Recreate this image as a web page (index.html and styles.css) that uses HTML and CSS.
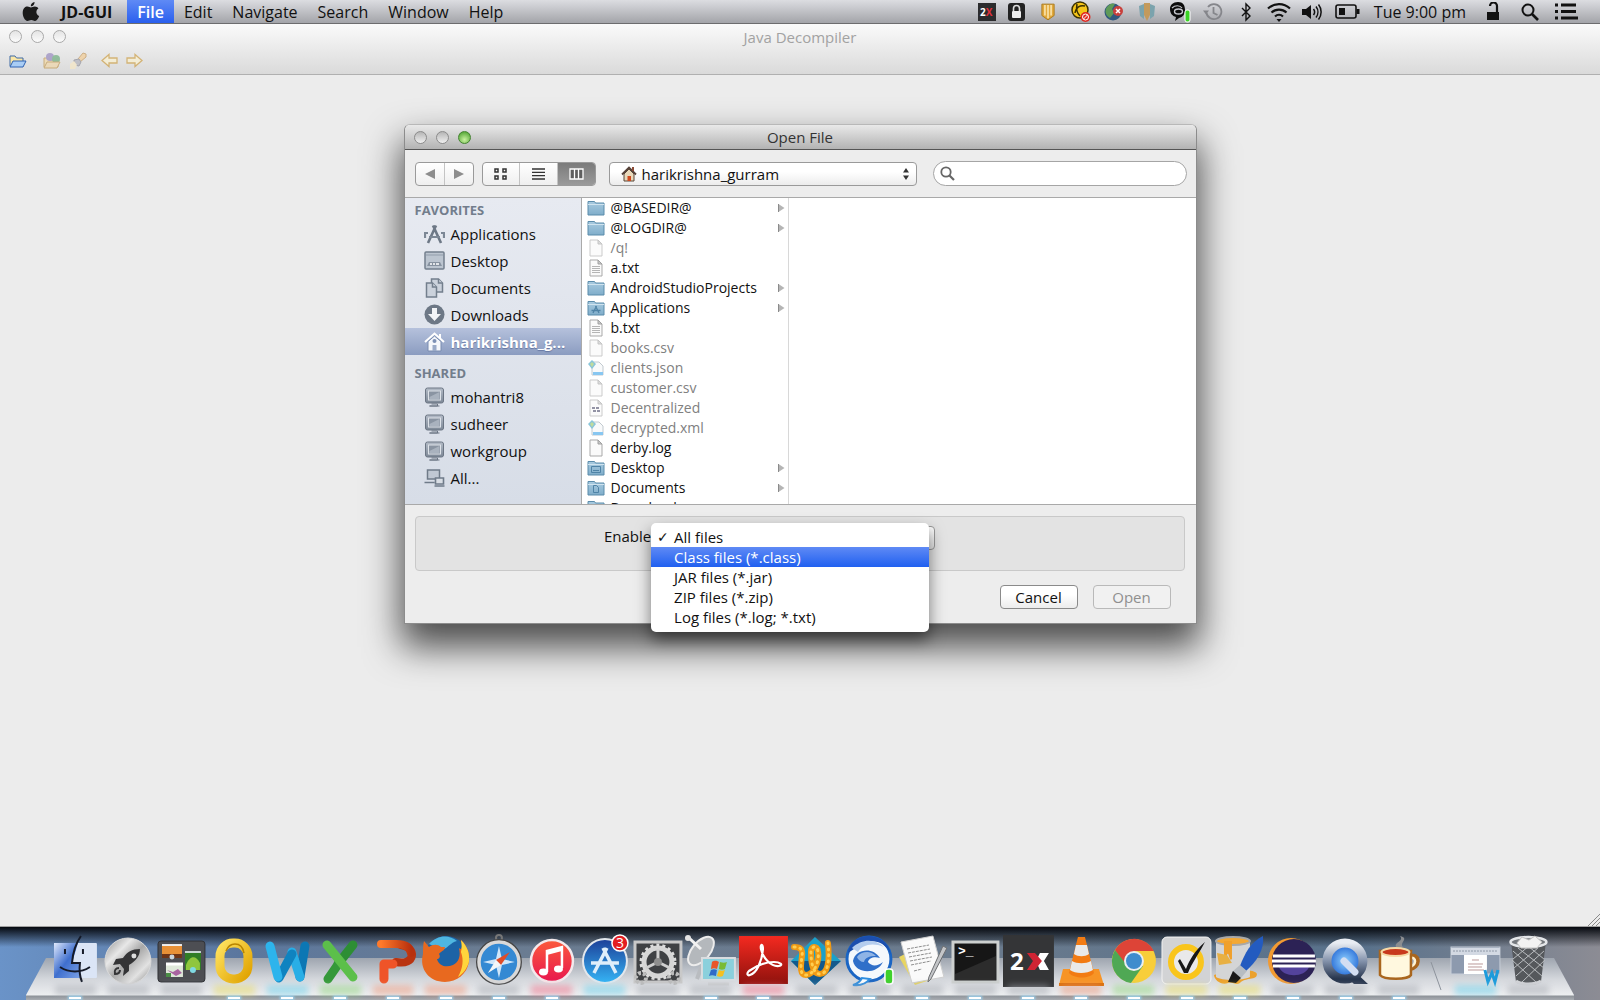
FILE: index.html
```
<!DOCTYPE html>
<html lang="en">
<head>
  <meta charset="UTF-8">
  <meta name="viewport" content="width=device-width, initial-scale=1.0">
  <title>Java Decompiler</title>
  <link rel="stylesheet" href="styles.css">
</head>
<body>
  <!-- shared gradients and symbols -->
  <svg class="defs" width="0" height="0" aria-hidden="true">
    <defs>
      <linearGradient id="g-folder" x1="0" y1="0" x2="0" y2="1"><stop offset="0" stop-color="#a9cbe0"/><stop offset="1" stop-color="#7fadca"/></linearGradient>
      <linearGradient id="g-steel" x1="0" y1="0" x2="0" y2="1"><stop offset="0" stop-color="#b4bcc8"/><stop offset="1" stop-color="#7d8896"/></linearGradient>
      <linearGradient id="g-silver" x1="0" y1="0" x2="1" y2="1"><stop offset="0" stop-color="#8c8c8c"/><stop offset=".3" stop-color="#e8e8e8"/><stop offset=".5" stop-color="#a8a8a8"/><stop offset=".75" stop-color="#e2e2e2"/><stop offset="1" stop-color="#858585"/></linearGradient>
      <linearGradient id="g-finder" x1="0" y1="0" x2="1" y2="1"><stop offset="0" stop-color="#dfe9fb"/><stop offset=".5" stop-color="#3f6fce"/><stop offset="1" stop-color="#7ca2e6"/></linearGradient>
      <linearGradient id="g-blue" x1="0" y1="0" x2="0" y2="1"><stop offset="0" stop-color="#1c3f98"/><stop offset="1" stop-color="#35b4f5"/></linearGradient>
      <linearGradient id="g-red" x1="0" y1="0" x2="0" y2="1"><stop offset="0" stop-color="#fb5a3c"/><stop offset="1" stop-color="#e8174e"/></linearGradient>
      <linearGradient id="g-adobe" x1="0" y1="0" x2="0" y2="1"><stop offset="0" stop-color="#f42a20"/><stop offset="1" stop-color="#8f120d"/></linearGradient>
      <linearGradient id="g-orange" x1="0" y1="0" x2="1" y2="0"><stop offset="0" stop-color="#ff7a2b"/><stop offset="1" stop-color="#b8300e"/></linearGradient>
      <linearGradient id="g-yellow" x1="0" y1="0" x2="1" y2="1"><stop offset="0" stop-color="#ffe25e"/><stop offset="1" stop-color="#e0a200"/></linearGradient>
      <linearGradient id="g-glass" x1="0" y1="0" x2="0" y2="1"><stop offset="0" stop-color="#e9edf3"/><stop offset=".5" stop-color="#8392ab"/><stop offset="1" stop-color="#26344c"/></linearGradient>
      <radialGradient id="g-ball"><stop offset="0" stop-color="#8fd0ff"/><stop offset="1" stop-color="#1a5ed0"/></radialGradient>

      <symbol id="folder" viewBox="0 0 18 16"><path d="M1 3V1.500h6.500l1 1.500H17v12H1z" fill="url(#g-folder)" stroke="#5b8cab"/><path d="M1 4.500h16" stroke="#cfe3ef"/></symbol>
      <symbol id="page" viewBox="0 0 18 18"><path d="M3 1h8l4 4v12H3z" fill="#fafafa" stroke="#a9a9a9"/><path d="M11 1v4h4z" fill="#c8c8c8" stroke="#a0a0a0"/></symbol>
      <symbol id="page-text" viewBox="0 0 18 18"><use href="#page"/><path d="M5 7.500h8M5 9.500h8M5 11.500h8M5 13.500h8" stroke="#b5b5b5"/></symbol>
      <symbol id="page-code" viewBox="0 0 18 18"><path d="M5 3h7l4 4v9H5z" fill="#f6f8fa" stroke="#9aa7b0"/><path d="M5 1l4 4-4 5-4-5z" fill="#3d9fc2"/><path d="M5 3l2 2-2 3-2-3z" fill="#98c55a"/><path d="M6 13h10v3H6z" fill="#3aa3e8"/></symbol>
      <symbol id="pc" viewBox="0 0 20 20"><rect x="1" y="1" width="18" height="15" rx="2" fill="url(#g-steel)" stroke="#6c7684"/><rect x="4" y="4" width="12" height="9" fill="#8a94a2" stroke="#dde2e8"/><path d="M5 10l10-5v7H5z" fill="#a9b2be"/><path d="M7 17h6v2H5h10" fill="none" stroke="#6c7684"/></symbol>
      <symbol id="more" viewBox="0 0 6 8"><path d="M0 0v8l6-4z" fill="#b5b5b5"/><path d="M0 0v8" stroke="#8b8b8b"/></symbol>
    </defs>
  </svg>

  <header class="menubar">
    <nav class="menus">
      <a class="apple" href="#" aria-label="Apple menu"><svg width="18" height="20" viewBox="0 0 18 20"><path d="M12.500 0c.3 2-1.500 4.400-3.700 4.300C8.500 2.200 10.500.3 12.500 0zM9 5.500c1 0 2-1 3.900-1 1.400.1 2.700.7 3.500 1.900-3 2-2.500 6.200.8 7.500-.8 2.100-2.400 5-4.100 5.100-1.500.1-1.900-.9-3.800-.9s-2.400.9-3.800.9C2.800 18.900.5 14 .7 10.500.9 6.500 3.200 4.600 5.400 4.600c1.600 0 2.500.9 3.600.9z" fill="#1a1a1a"/></svg></a>
      <a class="app-name" href="#">JD-GUI</a>
      <a class="active" href="#">File</a>
      <a href="#">Edit</a>
      <a href="#">Navigate</a>
      <a href="#">Search</a>
      <a href="#">Window</a>
      <a href="#">Help</a>
    </nav>
    <div class="status">
      <span class="st narrow"><svg width="18" height="18" viewBox="0 0 18 18"><rect width="18" height="18" fill="#2c2c2e"/><text x="2" y="13" class="t2x-small" fill="#fff">2<tspan fill="#e0303c">X</tspan></text></svg></span>
      <span class="st narrow"><svg width="17" height="18" viewBox="0 0 17 18"><rect width="17" height="18" rx="3" fill="#222"/><path d="M5.500 8V5.500a3 3 0 0 1 6 0V8" fill="none" stroke="#ddd" stroke-width="1.600"/><rect x="4" y="8" width="9" height="7" rx="1" fill="#eee"/></svg></span>
      <span class="st"><svg width="14" height="20" viewBox="0 0 16 20"><path d="M1 1h14v13l-7 5-7-5z" fill="#e2a93c" stroke="#a67516"/><path d="M4.500 2v12M8 2v15M11.500 2v12" stroke="#fff0c4" stroke-width="1.500"/></svg></span>
      <span class="st"><svg width="20" height="22" viewBox="0 0 20 22"><circle cx="9" cy="9" r="8" fill="#f5c518" stroke="#3b3000" stroke-width="1.500"/><path d="M4 12C5 6 9 4 14 5M6 3c-1 5 0 9 3 12" fill="none" stroke="#3b3000" stroke-width="1.500"/><circle cx="14.500" cy="16" r="5" fill="#e02a22"/><circle cx="14.500" cy="16" r="3" fill="none" stroke="#fff"/><path d="M12.500 18l4-4" stroke="#fff"/></svg></span>
      <span class="st"><svg width="20" height="20" viewBox="0 0 20 20"><circle cx="9" cy="10" r="8.500" fill="#31597e"/><path d="M3 5c3-4 6-4 8-3l-3 5 2 4-4 5C2 14 0 9 3 5z" fill="#5f9a58"/><circle cx="14" cy="9" r="5" fill="#c8403c"/><path d="M12 7l4 4m0-4l-4 4" stroke="#fff" stroke-width="1.500"/></svg></span>
      <span class="st"><svg width="18" height="20" viewBox="0 0 18 20"><path d="M1 4l5-2v15l-4-3zM17 4l-5-2v15l4-3z" fill="#7ba3ad"/><path d="M6 1h6v12l-3 6-3-6z" fill="#c39a5c"/></svg></span>
      <span class="st"><svg width="22" height="22" viewBox="0 0 22 22"><path d="M9 1c5 0 7 3 7 8 0 4-2 7-6 8l-4 3 1-4C3 15 1 12 1 8c0-4 3-7 8-7z" fill="#0c0c0c"/><path d="M3 7c3-3 8-3 10 0" fill="none" stroke="#c4c5cb" stroke-width="1.200"/><ellipse cx="9.500" cy="10.500" rx="4" ry="2.500" fill="none" stroke="#c4c5cb" stroke-width="1.400"/><rect x="16" y="9" width="5" height="12" rx="2" fill="#3bd425" stroke="#fff"/></svg></span>
      <span class="st"><svg width="20" height="20" viewBox="0 0 20 20" fill="none" stroke="#85868b" stroke-width="1.800"><path d="M3.500 11A7.500 7.500 0 1 0 5 5"/><path d="M10.500 5v6l4 2"/><path d="M0 8.500h6L3 12.500z" fill="#85868b" stroke="none"/></svg></span>
      <span class="st"><svg width="12" height="20" viewBox="0 0 12 20"><path d="M2 6l8 8-4 4V2l4 4-8 8" fill="none" stroke="#111" stroke-width="1.400"/></svg></span>
      <span class="st"><svg width="24" height="20" viewBox="0 0 24 20" fill="none" stroke="#111" stroke-width="2.200"><path d="M1 6.500a16 16 0 0 1 22 0M4.500 10.500a11 11 0 0 1 15 0M8 14.500a6 6 0 0 1 8 0"/><path d="M12 20l-2.500-3h5z" fill="#111" stroke="none"/></svg></span>
      <span class="st"><svg width="20" height="18" viewBox="0 0 20 18"><path d="M0 6h4l5-4v14l-5-4H0z" fill="#111"/><path d="M11.500 6a5 5 0 0 1 0 6M14 3.500a9 9 0 0 1 0 11M16.500 1.500a12 12 0 0 1 0 15" fill="none" stroke="#111" stroke-width="1.500"/></svg></span>
      <span class="st wide"><svg width="25" height="15" viewBox="0 0 25 15"><rect x="1" y="1" width="20" height="13" rx="2" fill="none" stroke="#111" stroke-width="1.600"/><rect x="4" y="4" width="6" height="7" fill="#111"/><path d="M23 5v5" stroke="#111" stroke-width="3"/></svg></span>
      <time class="clock">Tue 9:00 pm</time>
      <span class="st wide"><svg width="13" height="19" viewBox="0 0 13 19"><path d="M4 4a3.500 3.500 0 0 1 7 0v6" fill="none" stroke="#111" stroke-width="2.200"/><rect x="1" y="10" width="12" height="8" fill="#111"/></svg></span>
      <span class="st wide"><svg width="18" height="18" viewBox="0 0 18 18"><circle cx="7" cy="7" r="5.500" fill="none" stroke="#111" stroke-width="2"/><path d="M11 11l6 6" stroke="#111" stroke-width="2.600"/></svg></span>
      <span class="st wide"><svg width="23" height="17" viewBox="0 0 23 17"><path d="M0 2h3M0 8.500h3M0 15h3M6 2h15M6 8.500h15M6 15h17" stroke="#111" stroke-width="3"/></svg></span>
    </div>
  </header>

  <main class="window">
    <div class="window-head">
      <div class="titlebar">
        <span class="lights"><i></i><i></i><i></i></span>
        <h1>Java Decompiler</h1>
      </div>
      <div class="toolbar">
        <button aria-label="Open file"><svg width="18" height="16" viewBox="0 0 18 16"><path d="M1 13V3h5l1.500 2H14v4" fill="#fbe7a6" stroke="#3f6ba5"/><path d="M4 8h13l-3 6H1z" fill="#a9cdf5" stroke="#2f62b2"/></svg></button>
        <button class="faded second" aria-label="Open type"><svg width="18" height="17" viewBox="0 0 18 17"><path d="M1 15V6h4l1 2h9v7z" fill="#f3d79b" stroke="#b98a3b"/><circle cx="7" cy="5" r="4" fill="#8a7bb8"/><circle cx="13" cy="7" r="4" fill="#5aa36c"/><path d="M4 10h13l-3 6H1z" fill="#f2d5a0" stroke="#b98a3b"/></svg></button>
        <button class="faded" aria-label="Search"><svg width="18" height="17" viewBox="0 0 18 17"><path d="M9 7l5-6 3 1v3l-6 5z" fill="#f4c887" stroke="#bd8a45"/><path d="M5 8l5-1 2 3-2 4-5-1z" fill="#a9a9b4" stroke="#7c7c88"/><path d="M1 12l4-3 3 4-2 4H1z" fill="#fbe9c0"/></svg></button>
        <button class="faded third" aria-label="Back"><svg width="17" height="15" viewBox="0 0 17 15"><path d="M1 7.500l7-6v3.500h8v5H8v3.500z" fill="#fff5cf" stroke="#c9942f" stroke-width="1.300"/></svg></button>
        <button class="faded" aria-label="Forward"><svg width="17" height="15" viewBox="0 0 17 15"><path d="M16 7.500l-7-6v3.500H1v5h8v3.500z" fill="#fff5cf" stroke="#c9942f" stroke-width="1.300"/></svg></button>
      </div>
    </div>

    <section class="dialog" role="dialog" aria-labelledby="dialog-title">
      <div class="dialog-title">
        <span class="lights"><i></i><i></i><i class="green"></i></span>
        <h2 id="dialog-title">Open File</h2>
      </div>

      <div class="dialog-tools">
        <div class="segment nav-seg">
          <button aria-label="Back"><svg width="10" height="10" viewBox="0 0 10 10"><path d="M10 0v10L0 5z" fill="#8d8d8d"/></svg></button>
          <button aria-label="Forward"><svg width="10" height="10" viewBox="0 0 10 10"><path d="M0 0v10l10-5z" fill="#8d8d8d"/></svg></button>
        </div>
        <div class="segment view-seg">
          <button aria-label="Icons"><svg width="13" height="12" viewBox="0 0 13 12" fill="none" stroke="#333" stroke-width="1.500"><path d="M1 1h3v3H1zM9 1h3v3H9zM1 8h3v3H1zM9 8h3v3H9z"/></svg></button>
          <button aria-label="List"><svg width="13" height="12" viewBox="0 0 13 12"><path d="M0 1h13M0 4.300h13M0 7.700h13M0 11h13" stroke="#333" stroke-width="1.300"/></svg></button>
          <button class="on" aria-label="Columns"><svg width="15" height="12" viewBox="0 0 15 12" fill="#5f5f5f" stroke="#fff" stroke-width="1.300"><path d="M1 1h13v10H1zM5.500 1v10M9.500 1v10"/></svg></button>
        </div>
        <div class="path">
          <svg width="16" height="16" viewBox="0 0 16 16"><path d="M3 8v7h10V8L8 3z" fill="#e9d9bb" stroke="#5b4636"/><path d="M1 8.500l7-7 7 7" fill="none" stroke="#56423a" stroke-width="1.800"/><path d="M12 1v4" stroke="#8c4a35" stroke-width="2"/><path d="M6.500 10h3.500v5H6.500z" fill="#d1491e"/></svg>
          <select aria-label="Folder"><option>harikrishna_gurram</option></select>
          <svg width="6" height="12" viewBox="0 0 6 12"><path d="M0 4.500h6L3 0zM0 7.500h6L3 12z" fill="#333"/></svg>
        </div>
        <label class="search">
          <svg width="15" height="15" viewBox="0 0 15 15"><circle cx="6" cy="6" r="4.700" fill="none" stroke="#666" stroke-width="1.800"/><path d="M9.500 9.500l4.500 4.500" stroke="#666" stroke-width="2.200"/></svg>
          <input type="text" aria-label="Search">
        </label>
      </div>

      <div class="browser">
        <aside class="sidebar">
          <h3>FAVORITES</h3>
          <a href="#"><svg width="21" height="20" viewBox="0 0 21 20"><path d="M4 19L12 1.500M17 19L9 1.500" stroke="#6d7886" stroke-width="2.600"/><path d="M1 14V9h3M20 14V9h-3M5 13h11" fill="none" stroke="#7c8795" stroke-width="2.200"/></svg>Applications</a>
          <a href="#"><svg width="21" height="19" viewBox="0 0 21 19"><rect x="1" y="1" width="19" height="17" rx="1" fill="#bcc5d0" stroke="#737f8d" stroke-width="1.500"/><path d="M2 4h17" stroke="#929dab"/><path d="M3 15l2-4h11l2 4z" fill="#8792a0"/><path d="M6 13h2m1 0h2m1 0h3" stroke="#fff" stroke-width="1.500"/></svg>Desktop</a>
          <a href="#"><svg width="20" height="20" viewBox="0 0 20 20" fill="#cbd2dc" stroke="#737f8d" stroke-width="1.500"><path d="M7 14V1h7l4 4v9z"/><path d="M2 5h6l4 4v10H2z"/><path d="M8 5v4h4M14 1v4h4"/></svg>Documents</a>
          <a href="#"><svg width="21" height="21" viewBox="0 0 21 21"><circle cx="10.500" cy="10.500" r="10" fill="#6d7886"/><path d="M8 4h5v6h4l-6.500 7L4 10h4z" fill="#f3f5f8"/></svg>Downloads</a>
          <a class="selected" href="#"><svg width="21" height="20" viewBox="0 0 21 20"><path d="M1 10l9.500-8.500L20 10M16 2v4" fill="none" stroke="#fff" stroke-width="2"/><path d="M4 9.500L10.500 4 17 9.500V19H4z" fill="#f5f7fb" stroke="#788bb0"/><circle cx="10.500" cy="9" r="2" fill="#7d90b5"/><path d="M8.500 13h4v6h-4z" fill="#9aaac8"/></svg>harikrishna_g...</a>
          <h3 class="shared">SHARED</h3>
          <a href="#"><svg width="20" height="20"><use href="#pc"/></svg>mohantri8</a>
          <a href="#"><svg width="20" height="20"><use href="#pc"/></svg>sudheer</a>
          <a href="#"><svg width="20" height="20"><use href="#pc"/></svg>workgroup</a>
          <a href="#"><svg width="20" height="18" viewBox="0 0 20 18"><path d="M3 1h12v9H3z" fill="#c0c8d3" stroke="#6f7b89" stroke-width="1.500"/><path d="M0 13.500h10M11 9h8v6h-8zM10 17h10" fill="#d9dee5" stroke="#6f7b89" stroke-width="1.600"/></svg>All...</a>
        </aside>

        <ul class="files">
          <li><svg width="18" height="16"><use href="#folder"/></svg><span>@BASEDIR@</span><svg class="more"><use href="#more"/></svg></li>
          <li><svg width="18" height="16"><use href="#folder"/></svg><span>@LOGDIR@</span><svg class="more"><use href="#more"/></svg></li>
          <li class="off"><svg width="18" height="18"><use href="#page"/></svg><span>/q!</span></li>
          <li><svg width="18" height="18"><use href="#page-text"/></svg><span>a.txt</span></li>
          <li><svg width="18" height="16"><use href="#folder"/></svg><span>AndroidStudioProjects</span><svg class="more"><use href="#more"/></svg></li>
          <li><svg width="18" height="16" viewBox="0 0 18 16"><use href="#folder"/><path d="M6 13l3.500-7M12 13L8.500 6M4.500 10.500h9" stroke="#4f83a6" stroke-width="1.300"/></svg><span>Applications</span><svg class="more"><use href="#more"/></svg></li>
          <li><svg width="18" height="18"><use href="#page-text"/></svg><span>b.txt</span></li>
          <li class="off"><svg width="18" height="18"><use href="#page"/></svg><span>books.csv</span></li>
          <li class="off"><svg width="18" height="18"><use href="#page-code"/></svg><span>clients.json</span></li>
          <li class="off"><svg width="18" height="18"><use href="#page"/></svg><span>customer.csv</span></li>
          <li class="off"><svg width="18" height="18" viewBox="0 0 18 18"><use href="#page"/><path d="M5 8h3v2H5zM9 8h3v2H9zM6 11h3v2H6zM10 11h3v2h-3z" fill="#4c4c6a"/></svg><span>Decentralized</span></li>
          <li class="off"><svg width="18" height="18"><use href="#page-code"/></svg><span>decrypted.xml</span></li>
          <li><svg width="18" height="18"><use href="#page"/></svg><span>derby.log</span></li>
          <li><svg width="18" height="16" viewBox="0 0 18 16"><use href="#folder"/><path d="M4.500 6.500h9v6h-9zM6 10.500h6" fill="none" stroke="#4f83a6"/></svg><span>Desktop</span><svg class="more"><use href="#more"/></svg></li>
          <li><svg width="18" height="16" viewBox="0 0 18 16"><use href="#folder"/><path d="M6.500 5.500h3l2 2v5h-5z" fill="none" stroke="#4f83a6"/></svg><span>Documents</span><svg class="more"><use href="#more"/></svg></li>
          <li><svg width="18" height="16"><use href="#folder"/></svg><span>Downloads</span><svg class="more"><use href="#more"/></svg></li>
        </ul>
        <div class="preview"></div>
      </div>

      <div class="filter">
        <label for="enable">Enable:</label>
        <div class="filter-box">
          <select id="enable">
            <option>All files</option>
            <option>Class files (*.class)</option>
            <option>JAR files (*.jar)</option>
            <option>ZIP files (*.zip)</option>
            <option>Log files (*.log; *.txt)</option>
          </select>
          <ul class="popup" role="listbox" aria-label="Enable">
            <li role="option" aria-selected="true">All files</li>
            <li role="option" class="hover">Class files (*.class)</li>
            <li role="option">JAR files (*.jar)</li>
            <li role="option">ZIP files (*.zip)</li>
            <li role="option">Log files (*.log; *.txt)</li>
          </ul>
        </div>
      </div>

      <div class="actions">
        <button>Cancel</button>
        <button disabled>Open</button>
      </div>
    </section>

    <svg class="grip" width="12" height="12" viewBox="0 0 12 12"><path d="M0 12L12 0M4 12l8-8M8 12l4-4" stroke="#8a8a8a"/></svg>
  </main>

  <footer class="dock">
    <ul>
      <li class="open"><svg viewBox="0 0 53 73"><rect x="5" y="16" width="43" height="35" rx="1" fill="#dbe5f6"/><path d="M5 16h24l-6 20h7l2 15H5z" fill="url(#g-finder)"/><path d="M32 9c-5 7-8 15-9 27h8c-1 8 0 14 2 19" fill="none" stroke="#151a28" stroke-width="2"/><path d="M16 22v5M34 22v5" stroke="#151a28" stroke-width="2"/><path d="M11 40c9 6 21 6 30 0" fill="none" stroke="#151a28" stroke-width="2"/></svg></li>
      <li><svg viewBox="0 0 53 73"><circle cx="26" cy="34" r="23" fill="url(#g-silver)" stroke="#d9d9d9"/><path d="M38 22c-8 0-13 3-17 9l-7 1-3 6 7-1 4 5-1 7 6-5v-6c7-4 11-9 11-16z" fill="#343436"/><circle cx="32" cy="29" r="2.500" fill="#ddd"/><path d="M17 41c-3 0-5 2-4 6 3 0 5-1 5-4" fill="none" stroke="#343436" stroke-width="2"/></svg></li>
      <li><svg viewBox="0 0 53 73"><rect x="3" y="14" width="47" height="41" rx="3" fill="#4d4e53" stroke="#303136"/><rect x="7" y="18" width="20" height="13" fill="#e79036"/><path d="M7 27h20v4H7z" fill="#6d3417"/><path d="M7 18h20" stroke="#eee" stroke-width="2"/><circle cx="17" cy="30" r="2.500" fill="#c9d4dc"/><rect x="30" y="25" width="16" height="18" fill="#2f7d25"/><path d="M31 38c4-10 10-10 14-2v7H31z" fill="#8fc63d"/><circle cx="38" cy="43" r="3" fill="#7fd8e2"/><path d="M30 25h16" stroke="#c9d6d3" stroke-width="2"/><rect x="11" y="36" width="17" height="14" fill="#dfe8d9"/><path d="M11 37h17" stroke="#fff" stroke-width="3"/><path d="M12 43l6 2 5-3 4 4-6 3z" fill="#a964a0"/><path d="M11 46h5v4h-5z" fill="#4b8d46"/></svg></li>
      <li class="open yellow"><svg viewBox="0 0 53 73"><rect x="12" y="16" width="28" height="36" rx="13" fill="none" stroke="url(#g-yellow)" stroke-width="9"/><path d="M18 24c2-5 5-7 9-7 5 0 8 3 9 9" fill="none" stroke="#b98500" stroke-width="1.500"/></svg></li>
      <li class="open cyan"><svg viewBox="0 0 53 73" fill="none" stroke-width="9" stroke-linecap="round"><path d="M44 19l-5 31" stroke="#0c77b4"/><path d="M31 25l8 25" stroke="#29aee6"/><path d="M31 27L18 51" stroke="#0f83c0"/><path d="M9 19l8 31" stroke="#2db4ec"/></svg></li>
      <li class="open lime"><svg viewBox="0 0 53 73" fill="none" stroke-width="9" stroke-linecap="round"><path d="M39 18L24 37" stroke="#2d8e34"/><path d="M23 39l-9 13" stroke="#35983a"/><path d="M13 18l26 32" stroke="#5cbf4a"/></svg></li>
      <li class="open orange"><svg viewBox="0 0 53 73" fill="none" stroke-linecap="round"><path d="M29 35c20 4 21-15 5-17" stroke="#b93411" stroke-width="8"/><path d="M14 17h15c9 0 14 3 15 9" stroke="url(#g-orange)" stroke-width="8"/><path d="M17 52V37h9" stroke="#ef5428" stroke-width="9" stroke-linejoin="round"/></svg></li>
      <li class="open orange"><svg viewBox="0 0 53 73"><circle cx="27" cy="31" r="22" fill="#1c63a6"/><path d="M10 17c8-9 20-10 28-3-7 2-8 6-13 8-5-2-9-2-15-5z" fill="#4fb6e0"/><path d="M5 14l5 6c4-3 9-3 12 0h4c0 4-4 4-6 7 2 3 0 5-2 5 2 7 9 9 16 6 6-3 8-9 6-17 3 3 4-2 2-8 7 7 9 14 8 22-2 12-12 20-24 20C10 55 0 42 4 27c0-5 0-9 1-13z" fill="#e8691f"/><path d="M42 13c7 7 9 14 8 22-2 7-6 12-11 15 5-9 6-17 3-25 1-4 1-7 0-12z" fill="#ffd53c"/></svg></li>
      <li class="open"><svg viewBox="0 0 53 73"><circle cx="27" cy="11" r="3" fill="none" stroke="#777" stroke-width="2"/><circle cx="27" cy="35" r="21" fill="#3489d3" stroke="#454545" stroke-width="4"/><circle cx="27" cy="35" r="20" fill="none" stroke="#d9d9d9" stroke-width="3.500"/><path d="M27 19l3 13 13 3-13 3-3 13-3-13-13-3 13-3z" fill="#cfe6fa"/><path d="M38 25L29 38l-5-5z" fill="#e04c28"/><path d="M16 46l8-13 5 5z" fill="#f4f6f8"/></svg></li>
      <li class="open pink"><svg viewBox="0 0 53 73"><circle cx="27" cy="34" r="21" fill="url(#g-red)" stroke="#f3e9ec" stroke-width="2.500"/><path d="M22 45V24l15-4v21" fill="none" stroke="#fff" stroke-width="2.500"/><path d="M22 24l15-4v4l-15 4z" fill="#fff"/><ellipse cx="18.500" cy="45" rx="4.500" ry="3.500" fill="#fff"/><ellipse cx="33.500" cy="42" rx="4.500" ry="3.500" fill="#fff"/></svg></li>
      <li class="cyan"><svg viewBox="0 0 53 73"><circle cx="27" cy="34" r="22" fill="url(#g-blue)" stroke="#e3e7ec" stroke-width="2"/><path d="M16 46l13-25M38 46L25 21M13 36h28" stroke="#dfeefa" stroke-width="3.500"/><circle cx="42" cy="16" r="8" fill="#e31d22" stroke="#fff" stroke-width="1.500"/><text x="42" y="21" class="badge" fill="#fff">3</text></svg></li>
      <li><svg viewBox="0 0 53 73"><rect x="4" y="15" width="46" height="40" fill="#3f4144" stroke="#c9c9c9" stroke-width="3"/><circle cx="27" cy="35" r="14" fill="none" stroke="#d6d6d6" stroke-width="5"/><circle cx="27" cy="35" r="17" fill="none" stroke="#dcdcdc" stroke-width="3" stroke-dasharray="3 3"/><path d="M27 35V22M27 35l12 6M27 35l-12 6" stroke="#cfcfcf" stroke-width="3"/><circle cx="27" cy="35" r="4" fill="#8e8e8e"/><circle cx="10" cy="51" r="5" fill="none" stroke="#bdbdbd" stroke-width="4" stroke-dasharray="3 2"/><circle cx="43" cy="51" r="5" fill="none" stroke="#bdbdbd" stroke-width="4" stroke-dasharray="3 2"/></svg></li>
      <li class="open"><svg viewBox="0 0 53 73"><path d="M13 52l8-22" stroke="#b9bcc0" stroke-width="4"/><ellipse cx="17" cy="24" rx="9" ry="17" transform="rotate(40 17 24)" fill="#b4b8bc" stroke="#ececec" stroke-width="2"/><path d="M4 10l13 12" stroke="#f2f2f2" stroke-width="3"/><circle cx="4" cy="11" r="3" fill="#e4e4e4"/><rect x="18" y="31" width="33" height="22" fill="#8bd0dc" stroke="#d9dde0" stroke-width="2"/><path d="M28 35c3-2 5-1 7 0l-2 7c-2-1-4-1-6 0z" fill="#e8562a"/><path d="M36 35c3 1 5 1 7 0l-2 7c-2 1-4 1-6 0z" fill="#79bb35"/><path d="M27 43c2-1 4-1 6 0l-1 6c-3-1-5-1-7 0z" fill="#2e6bc8"/><path d="M35 43c2 1 4 1 6 0l-2 6c-2 1-4 1-6 0z" fill="#f5c021"/><path d="M24 57h21" stroke="#d2d4d6" stroke-width="3"/></svg></li>
      <li class="open pink"><svg viewBox="0 0 53 73"><rect x="2" y="9" width="49" height="48" fill="url(#g-adobe)"/><path d="M13 48c7-2 12-14 13-26 0-6-3-5-2 0 2 9 10 18 18 17 5-1 1-4-5-4-9 0-18 4-25 9-3 3-1 5 1 4z" fill="none" stroke="#fff" stroke-width="2.200"/></svg></li>
      <li class="open"><svg viewBox="0 0 53 73"><path d="M25 10l26 24-26 24L1 34z" fill="#1ba0c9"/><path d="M1 34h50L25 58z" fill="#13598c"/><g fill="none" stroke-linecap="round"><path id="rope" d="M4 20c7 0 9 3 8 9-1 9-3 19 4 19 8 0 14-14 12-24-1-6-7-5-7 1 0 10 2 22 9 22 8 0 10-14 8-31" stroke="#f09a14" stroke-width="6"/><path d="M4 20c7 0 9 3 8 9-1 9-3 19 4 19 8 0 14-14 12-24-1-6-7-5-7 1 0 10 2 22 9 22 8 0 10-14 8-31" stroke="#ffcf52" stroke-width="3" stroke-dasharray="1 5"/></g></svg></li>
      <li class="open"><svg viewBox="0 0 53 73"><circle cx="26" cy="32" r="22" fill="#f4f8fc" stroke="#1a65c4" stroke-width="3"/><path d="M5 26C7 4 44 2 48 28 42 12 24 11 14 20z" fill="#1c4fae"/><path d="M9 21c9-9 23-10 32-1-12-5-22-2-26 5z" fill="#b4cdee"/><path d="M10 34c2-12 20-15 27-3-6-2-11 0-12 4 4 5 10 4 15 0-5 12-27 13-30-1z" fill="#2f6fc9"/><path d="M14 30c4-6 14-7 19-1-7 0-11 2-12 6-3 0-6-2-7-5z" fill="#8fb4e6"/><path d="M19 51c-2 4-5 6-9 7 7 1 13-1 17-6z" fill="#fff" stroke="#2b8de0" stroke-width="2"/><rect x="42" y="42" width="8" height="15" rx="3" fill="#3fd12b" stroke="#fff" stroke-width="1.500"/></svg></li>
      <li class="open"><svg viewBox="0 0 53 73"><path d="M3 30l22-11 12 33-18 6z" fill="#e8d562"/><path d="M5 15l32-6 11 41-32 6z" fill="#fafafa" stroke="#cfcfcf"/><path d="M11 22l22-4M12 26l22-4M13 30l22-4M14 34l22-4M15 38l20-4M18 44l8-2" stroke="#8d8d8d" stroke-dasharray="3 1"/><path d="M51 21L35 52l-3 3 1-5 14-31z" fill="#c3c5c8" stroke="#6b6d70"/></svg></li>
      <li class="open"><svg viewBox="0 0 53 73"><rect x="4" y="15" width="45" height="40" fill="#161616" stroke="#cdd0cf" stroke-width="3"/><path d="M6 47l41-18v24H6z" fill="#2c2c2c"/><text x="9" y="28" class="term" fill="#fff">&gt;_</text></svg></li>
      <li class="open"><svg viewBox="0 0 53 73"><rect x="1" y="8" width="51" height="52" fill="#343537"/><text x="8" y="43" class="t2x" fill="#fff">2</text><path d="M47 26h-9l-4 8 4 9h9l-5-9z" fill="#fff"/><path d="M25 26h8l7 8-7 9h-8l6-9z" fill="#cf2433"/></svg></li>
      <li class="open orange"><svg viewBox="0 0 53 73"><path d="M8 42h36l5 16H4z" fill="#f79425"/><path d="M4 56h45v3H4z" fill="#d96f0c"/><path d="M23 10h7l9 36c-4 6-20 6-25 0z" fill="#f27b13"/><path d="M21 18h11l2 9c-4 3-11 3-15 0zM17 34c5 3 14 3 19 0l2 9c-6 4-18 4-23 0z" fill="#e9e9e9"/></svg></li>
      <li class="open lime"><svg viewBox="0 0 53 73"><circle cx="27" cy="34" r="22" fill="#f8ce3a"/><path d="M8 23a22 22 0 0 1 39 1H27L18 38z" fill="#dd4437"/><path d="M8 23a22 22 0 0 0 16 33l12-17-17-2z" fill="#4fa854"/><circle cx="27" cy="34" r="10" fill="#e9eef2"/><circle cx="27" cy="34" r="8" fill="#3f8ccd"/></svg></li>
      <li class="open yellow"><svg viewBox="0 0 53 73"><rect x="2" y="10" width="49" height="47" rx="5" fill="#d2d3d5" stroke="#f3f3f3"/><circle cx="26" cy="35" r="15" fill="#e9e9ea" stroke="#f9c51c" stroke-width="6"/><path d="M20 32l6 10c4-10 9-18 19-27-5 10-13 21-17 31h-4l-6-12z" fill="#171717"/></svg></li>
      <li class="open yellow"><svg viewBox="0 0 53 73"><path d="M1 48c8-4 41-8 43-1 0 7-12 3-17 9-4 3-8-2-12 0-6 3-14-3-14-8z" fill="#eba12e"/><path d="M3 14h34v36c-8 4-28 4-34 0z" fill="#d4d5d6"/><ellipse cx="20" cy="14" rx="17" ry="4" fill="#f3a834" stroke="#a8a8a8" stroke-width="2"/><path d="M11 14h8v18c-3 4-3-9-5-4-1 5-3 3-3-2z" fill="#f0a02b"/><path d="M4 26l10 2 5 8-13 2z" fill="#e8b043"/><path d="M50 9c2 14-7 26-17 35l-6-5c5-13 11-24 23-30z" fill="#235bc0"/><path d="M27 38l7 6-6 7-9-6z" fill="#b7bcc1"/><path d="M20 44l8 7-5 5-8-1z" fill="#181818"/></svg></li>
      <li class="open"><svg viewBox="0 0 53 73"><circle cx="25" cy="34" r="23" fill="#f29a32"/><circle cx="28" cy="34" r="22" fill="#2c2255"/><path d="M13 40c4 11 26 11 30 0z" fill="#54439d"/><path d="M7 29h42M6 34h44M7 39h42" stroke="#fff" stroke-width="3"/></svg></li>
      <li class="open"><svg viewBox="0 0 53 73"><path d="M31 40l18 17H35l-8-8z" fill="#26344c"/><circle cx="26" cy="34" r="18" fill="url(#g-ball)" stroke="url(#g-glass)" stroke-width="9"/><path d="M25 34l11 11" stroke="#d3def2" stroke-width="7" stroke-linecap="round"/></svg></li>
      <li class="open"><svg viewBox="0 0 53 73"><path d="M25 21c-5-6 8-6 3-12 10 2-1 7 3 11" fill="#8b8d90"/><path d="M38 30c10-4 10 11-1 12" fill="none" stroke="#a9661e" stroke-width="5"/><path d="M38 31c7-2 7 8-1 9" fill="none" stroke="#fff3d4" stroke-width="2.500"/><path d="M8 24h31v24c-3 5-27 5-31 0z" fill="#fff8df" stroke="#a9661e" stroke-width="2.500"/><ellipse cx="23.500" cy="25" rx="14" ry="4" fill="#c8391d" stroke="#f5d9a6" stroke-width="2"/></svg></li>
      <li class="divider"><svg viewBox="0 0 24 73"><path d="M6 35l10 28" stroke="#8d939c"/></svg></li>
      <li class="cyan"><svg viewBox="0 0 53 73"><rect x="2" y="20" width="49" height="27" fill="#8d9aae" stroke="#c6cdd8"/><path d="M2 21h49v7H2z" fill="#d3d9e3"/><path d="M4 24h44" stroke="#8e99a8" stroke-dasharray="2 1"/><path d="M15 28h23v19H15z" fill="#fff"/><path d="M23 33h7M19 37h15M19 40h14M19 43h16" stroke="#b99"/><path d="M36 43l3 12 4-9 3 9 3-12" fill="none" stroke="#1d9bdb" stroke-width="3"/></svg></li>
      <li><svg viewBox="0 0 53 73"><path d="M9 15h35l-5 40c-6 4-20 4-25 0z" fill="#55585c"/><path d="M11 24l29 25M10 33l24 22M16 21l26 20M26 19l16 13M42 24L14 49M43 33L19 56M36 21L12 41M27 19L11 32" stroke="#b9bcbf"/><ellipse cx="26.500" cy="15" rx="18" ry="5" fill="#75797e" stroke="#e4e6e9" stroke-width="2.500"/><path d="M15 16l5-6 7 3 6-4 7 6-5 6H19z" fill="#f2f2f2" stroke="#c2c2c2"/><path d="M14 54c5 4 19 4 25 0" fill="none" stroke="#d4d6d9" stroke-width="3"/></svg></li>
    </ul>
  </footer>
</body>
</html>
```
FILE: styles.css
```
* {
  box-sizing: border-box;
}
body {
  margin: 0;
  min-height: 100vh;
  display: flex;
  flex-direction: column;
  font-family: "Open Sans", "Noto Sans", sans-serif;
  font-size: 15px;
  line-height: 20px;
  color: #111;
  background: #ececec;
  overflow: hidden;
}
h1, h2, h3, ul {
  margin: 0;
  padding: 0;
  font-weight: normal;
  font-size: 15px;
}
ul {
  list-style: none;
}
a {
  color: inherit;
  text-decoration: none;
}
button, select, input {
  font: inherit;
  color: inherit;
  border: none;
  background: none;
  padding: 0;
  margin: 0;
}
svg {
  display: block;
  flex: none;
}
.defs {
  position: absolute;
}

/* menu bar */
.menubar {
  display: flex;
  justify-content: space-between;
  height: 24px;
  font-size: 16px;
  line-height: 24px;
  background: linear-gradient(#dcdde1, #a3a4a9);
  border-bottom: 1px solid #6c6c6e;
}
.menus, .status {
  display: flex;
}
.menus a {
  padding: 0 10px;
}
.menus .apple {
  padding: 2px 11px 0 22px;
}
.menus .app-name {
  padding: 0 15px 0 10px;
  font-weight: bold;
}
.menus .active {
  color: #fff;
  font-weight: 600;
  background: linear-gradient(#5f8af5, #2a5fee);
}
.status {
  padding-right: 15px;
}
.st {
  width: 33px;
  display: flex;
  align-items: center;
  justify-content: center;
}
.st.narrow {
  width: 30px;
}
.st.wide {
  width: 37px;
}
.clock {
  padding: 0 8px;
}
.t2x-small {
  font: bold 10px "Open Sans", sans-serif;
}

/* main window */
.window {
  flex: 1;
  display: flex;
  flex-direction: column;
  background: #ececec;
  border-bottom: 1px solid #a0a0a0;
}
.window-head {
  height: 51px;
  background: linear-gradient(#fafafa, #dadada);
  border-bottom: 1px solid #b0b0b0;
}
.titlebar, .dialog-title {
  display: grid;
  grid-template-columns: 1fr auto 1fr;
  align-items: center;
  height: 25px;
  padding: 0 9px;
}
.titlebar h1 {
  color: #a2a2a2;
}
.lights {
  display: flex;
  gap: 9px;
}
.lights i {
  width: 13px;
  height: 13px;
  border: 1px solid #a9a9a9;
  border-radius: 50%;
  background: linear-gradient(#e4e4e4, #fbfbfb);
}
.toolbar {
  display: flex;
  align-items: center;
  height: 23px;
  padding-left: 9px;
  gap: 8px;
}
.faded {
  opacity: 0.6;
}
.toolbar .second {
  margin-left: 8px;
}
.toolbar .third {
  margin-left: 6px;
}
.grip {
  margin: auto 0 0 auto;
}

/* open dialog */
.dialog {
  width: 100%;
  max-width: 793px;
  margin: 49px auto 0;
  background: #ededed;
  border: 1px solid #8c8c8c;
  border-top-color: #b8b8b8;
  border-radius: 6px 6px 0 0;
  box-shadow: 0 20px 36px 3px rgba(0, 0, 0, 0.68);
}
.dialog-title {
  border-bottom: 1px solid #555;
  border-radius: 5px 5px 0 0;
  background: linear-gradient(#e9e9e9, #b3b3b3);
}
.dialog-title h2 {
  color: #333;
}
.dialog-title i {
  border-color: #8b8b8b;
  background: linear-gradient(#b5b5b5, #f0f0f0);
}
.dialog-title .green {
  border-color: #43832f;
  background: radial-gradient(circle at 50% 70%, #c9f2a0, #5bab3c 80%);
}
.dialog-tools {
  display: flex;
  align-items: center;
  height: 48px;
  padding: 0 9px 0 10px;
  border-bottom: 1px solid #a9a9a9;
}
.segment {
  display: flex;
  height: 24px;
  border: 1px solid #9a9a9a;
  border-radius: 4px;
  background: linear-gradient(#fff, #efefef);
  overflow: hidden;
}
.segment button {
  flex: 1;
  display: flex;
  align-items: center;
  justify-content: center;
}
.segment button + button {
  border-left: 1px solid #c4c4c4;
}
.segment .on {
  background: linear-gradient(#7b7b7b, #9a9a9a);
}
.nav-seg {
  width: 59px;
  margin-right: 8px;
}
.view-seg {
  width: 114px;
  margin-right: 13px;
}
.path {
  flex: 6;
  display: flex;
  align-items: center;
  height: 24px;
  padding: 0 7px 0 11px;
  gap: 5px;
  border: 1px solid #9a9a9a;
  border-radius: 4px;
  background: linear-gradient(#fff 40%, #ececec);
}
.path select {
  flex: 1;
  appearance: none;
}
.search {
  flex: 5;
  display: flex;
  align-items: center;
  height: 25px;
  margin-left: 16px;
  padding: 0 6px;
  background: #fff;
  border: 1px solid #a5a5a5;
  border-radius: 13px;
}
.search input {
  flex: 1;
  min-width: 0;
}

/* column browser */
.browser {
  display: flex;
  height: 307px;
  background: #fff;
  border-bottom: 1px solid #a9a9a9;
  overflow: hidden;
}
.sidebar {
  width: 177px;
  background: linear-gradient(#e7eaf1, #d7dde7);
  border-right: 1px solid #aaa;
}
.sidebar h3 {
  padding: 2px 10px 0;
  font-size: 13px;
  font-weight: bold;
  color: #727d8c;
}
.sidebar .shared {
  padding-top: 8px;
}
.sidebar a {
  display: flex;
  align-items: center;
  gap: 6px;
  height: 27px;
  padding-left: 19px;
}
.sidebar a svg {
  width: 21px;
}
.sidebar .selected {
  color: #fff;
  font-weight: bold;
  background: linear-gradient(#b5c1dc, #8b9cc0);
  text-shadow: 0 1px 1px #6475a0;
}
.files {
  width: 207px;
  border-right: 1px solid #d8d8d8;
  font-size: 14px;
}
.files li {
  display: flex;
  align-items: center;
  gap: 6px;
  height: 20px;
  padding: 0 3px 0 5px;
}
.files span {
  flex: 1;
}
.files .off {
  color: #808080;
}
.files .off svg {
  opacity: 0.6;
}
.files .more {
  width: 7px;
  height: 8px;
}
.preview {
  flex: 1;
}

/* filter row and its open menu */
.filter {
  display: flex;
  justify-content: center;
  gap: 4px;
  height: 55px;
  margin: 11px 11px 0 10px;
  padding: 9px 60px 0 0;
  border: 1px solid #c9c9c9;
  border-radius: 4px;
  background: #e3e3e3;
}
.filter-box {
  position: relative;
}
.filter-box select {
  width: 276px;
  height: 24px;
  padding-left: 12px;
  border: 1px solid #9a9a9a;
  border-radius: 4px;
  background: linear-gradient(#fff, #e6e6e6);
  appearance: none;
}
.popup {
  position: absolute;
  top: -3px;
  left: -8px;
  width: 278px;
  padding: 4px 0 5px;
  background: #fff;
  border-radius: 5px;
  box-shadow: 0 8px 16px rgba(0, 0, 0, 0.5);
}
.popup li {
  height: 20px;
  padding-left: 23px;
}
.popup [aria-selected="true"]::before {
  content: "✓";
  float: left;
  width: 17px;
  margin-left: -17px;
  font-family: "DejaVu Sans", sans-serif;
  font-size: 14px;
  font-weight: bold;
}
.popup .hover {
  color: #fff;
  background: linear-gradient(#5f8af5, #2060f0);
}
.actions {
  display: flex;
  justify-content: flex-end;
  gap: 15px;
  padding: 14px 25px;
}
.actions button {
  width: 78px;
  height: 24px;
  border: 1px solid #8a8a8a;
  border-radius: 4px;
  background: linear-gradient(#fff 40%, #ececec);
}
.actions button:disabled {
  color: #8f8f8f;
  border-color: #b9b9b9;
  background: #f1f1f1;
}

/* dock */
.dock {
  position: relative;
  height: 73px;
  background:
    linear-gradient(#05080e, rgba(5, 8, 14, 0) 20px),
    linear-gradient(90deg, #6a93c8, #5b779e 15%, #6a7c92 30%, #6b7b8d 60%, #58718b 85%, #8c8c94);
}
.dock::before {
  content: "";
  position: absolute;
  inset: 31px 26px 0;
  background: linear-gradient(#9ea5af, #d4d7dc 50%, #eceef0 37px, #8d9298 38px, #a9adb2);
  clip-path: polygon(20px 0, calc(100% - 20px) 0, 100% 37px, 100% 100%, 0 100%, 0 37px);
}
.dock ul {
  position: relative;
  display: flex;
  padding: 0 45px 0 49px;
}
.dock li {
  flex: 1;
  position: relative;
  height: 73px;
}
.dock .divider {
  flex: none;
  width: 24px;
}
.dock svg {
  width: 100%;
  height: 73px;
}
/* running indicator */
.dock .open::after {
  content: "";
  position: absolute;
  bottom: 1px;
  left: calc(50% - 6px);
  width: 12px;
  height: 2px;
  background: #fff;
  box-shadow: 0 0 3px 1px #9bdcff;
}
/* reflections on the shelf */
.dock li::before {
  content: "";
  position: absolute;
  bottom: 5px;
  left: 6px;
  right: 6px;
  height: 10px;
  background: #a9adb4;
  opacity: 0.5;
  filter: blur(3px);
}
.dock .divider::before {
  display: none;
}
.dock .yellow::before { background: #e9dc62; }
.dock .cyan::before { background: #6cd3ee; }
.dock .lime::before { background: #93d77f; }
.dock .orange::before { background: #f09a7c; }
.dock .pink::before { background: #f2738a; }
.badge {
  font: 14px "Open Sans", sans-serif;
  text-anchor: middle;
}
.term {
  font: bold 13px "Liberation Mono", monospace;
}
.t2x {
  font: bold 24px "Open Sans", sans-serif;
}
```
